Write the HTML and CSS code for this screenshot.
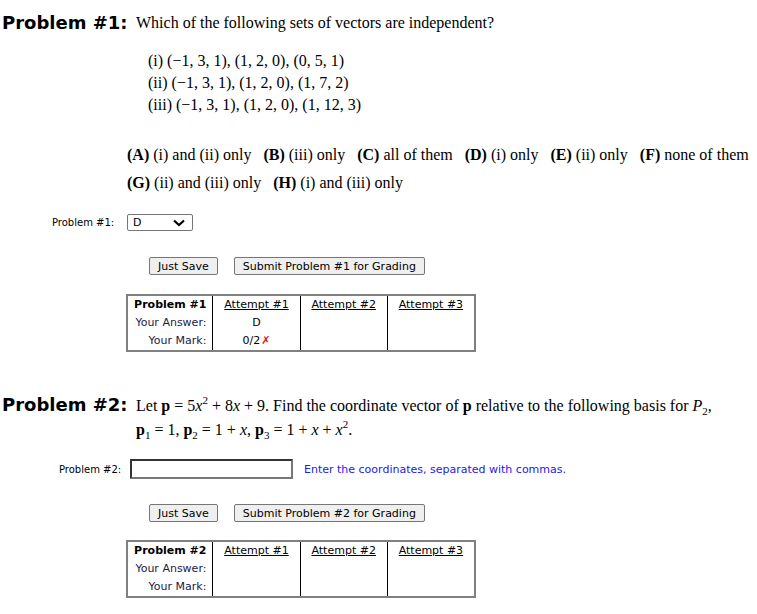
FILE: index.html
```html
<!DOCTYPE html>
<html lang="en">
<head>
  <meta charset="UTF-8" />
  <title>Problems</title>
  <link rel="stylesheet" href="styles.css">
</head>
<body>

  <div class="problem">
    <div class="problem-head">
      <span class="problem-title">Problem #1:</span>
      <div class="question">
        <p class="q-line">Which of the following sets of vectors are independent?</p>
        <div class="vectors">
          <div>(i) (&minus;1, 3, 1), (1, 2, 0), (0, 5, 1)</div>
          <div>(ii) (&minus;1, 3, 1), (1, 2, 0), (1, 7, 2)</div>
          <div>(iii) (&minus;1, 3, 1), (1, 2, 0), (1, 12, 3)</div>
        </div>
      </div>
    </div>

    <div class="choices">
      <div><b>(A)</b> (i) and (ii) only &nbsp; <b>(B)</b> (iii) only &nbsp; <b>(C)</b> all of them &nbsp; <b>(D)</b> (i) only &nbsp; <b>(E)</b> (ii) only &nbsp; <b>(F)</b> none of them</div>
      <div><b>(G)</b> (ii) and (iii) only &nbsp; <b>(H)</b> (i) and (iii) only</div>
    </div>

    <div class="answer-row">
      <label class="answer-label">Problem #1:</label>
      <div class="fake-select">
        <span>D</span>
        <svg width="14" height="10" viewBox="0 0 14 10"><path d="M2 2.5 L7 7 L12 2.5" fill="none" stroke="#000" stroke-width="2.2"/></svg>
      </div>
    </div>

    <div class="buttons">
      <button class="button">Just Save</button>
      <button class="button">Submit Problem #1 for Grading</button>
    </div>

    <table class="attempts">
      <tr>
        <th class="row-head">Problem #1</th>
        <td><a href="#">Attempt #1</a></td>
        <td><a href="#">Attempt #2</a></td>
        <td><a href="#">Attempt #3</a></td>
      </tr>
      <tr>
        <th class="row-label">Your Answer:</th>
        <td>D</td>
        <td></td>
        <td></td>
      </tr>
      <tr>
        <th class="row-label">Your Mark:</th>
        <td>0/2<span class="wrong">&#x2717;</span></td>
        <td></td>
        <td></td>
      </tr>
    </table>
  </div>

  <div class="problem problem-2">
    <div class="problem-head">
      <span class="problem-title">Problem #2:</span>
      <div class="question">
        <p class="q-line q2">Let <b>p</b> = 5<i>x</i><sup>2</sup> + 8<i>x</i> + 9. Find the coordinate vector of <b>p</b> relative to the following basis for <i>P</i><sub>2</sub>,</p>
        <p class="q-line q2"><b>p</b><sub>1</sub> = 1, <b>p</b><sub>2</sub> = 1 + <i>x</i>, <b>p</b><sub>3</sub> = 1 + <i>x</i> + <i>x</i><sup>2</sup>.</p>
      </div>
    </div>

    <div class="answer-row answer-row-2">
      <label class="answer-label">Problem #2:</label>
      <input class="text-input" type="text">
      <span class="hint">Enter the coordinates, separated with commas.</span>
    </div>

    <div class="buttons buttons-2">
      <button class="button">Just Save</button>
      <button class="button">Submit Problem #2 for Grading</button>
    </div>

    <table class="attempts attempts-2">
      <tr>
        <th class="row-head">Problem #2</th>
        <td><a href="#">Attempt #1</a></td>
        <td><a href="#">Attempt #2</a></td>
        <td><a href="#">Attempt #3</a></td>
      </tr>
      <tr>
        <th class="row-label">Your Answer:</th>
        <td></td>
        <td></td>
        <td></td>
      </tr>
      <tr>
        <th class="row-label">Your Mark:</th>
        <td></td>
        <td></td>
        <td></td>
      </tr>
    </table>
  </div>

</body>
</html>
```

FILE: styles.css
```css
body {
    margin: 0;
    padding: 12px 0 0 2px;
    background-color: #ffffff;
    color: #000;
    font-family: 'DejaVu Sans', Verdana, sans-serif;
}

.problem-head {
    display: flex;
    align-items: flex-start;
}

.problem-title {
    font-size: 18px;
    font-weight: bold;
    line-height: 22px;
    width: 134px;
    flex-shrink: 0;
    white-space: nowrap;
}

.question {
    font-family: 'Liberation Serif', 'Times New Roman', serif;
    font-size: 16px;
}

.q-line {
    margin: 0;
    line-height: 22px;
}

.vectors {
    margin: 16px 0 0 12px;
    line-height: 22px;
}

.choices {
    font-family: 'Liberation Serif', 'Times New Roman', serif;
    font-size: 16px;
    margin: 25px 0 0 125px;
    line-height: 28px;
    white-space: nowrap;
}

.answer-row {
    display: flex;
    align-items: center;
    margin-top: 17px;
}

.answer-label {
    font-size: 10px;
    width: 125px;
    padding-left: 50px;
    box-sizing: border-box;
}

.fake-select {
    width: 66px;
    height: 17px;
    border: 1px solid #767676;
    border-radius: 2px;
    box-sizing: border-box;
    display: flex;
    align-items: center;
    justify-content: space-between;
    padding: 0 6px 0 5px;
    font-size: 11px;
}

.buttons {
    display: flex;
    gap: 16px;
    margin: 26px 0 0 147px;
}

.buttons-2 {
    margin-top: 25px;
}

.button {
    font-family: 'DejaVu Sans', Verdana, sans-serif;
    font-size: 11px;
    color: #000;
    background-color: #efefef;
    border: 1px solid #767676;
    border-radius: 2px;
    padding: 0 8px;
    height: 18px;
}

.attempts {
    margin: 19px 0 0 124px;
    border: 2px solid #808080;
    border-collapse: collapse;
    font-size: 11px;
    width: 350px;
}

.attempts-2 {
    margin-top: 18px;
}

.attempts th,
.attempts td {
    padding: 0 6px;
    height: 18px;
    line-height: 18px;
    text-align: center;
    border-left: 1px solid #000;
    width: 75px;
}

.attempts th {
    text-align: right;
    border-left: none;
    width: 73px;
}

.attempts .row-head {
    font-weight: bold;
    color: #000;
}

.attempts .row-label {
    font-weight: normal;
    color: #1a1a4a;
}

.attempts a {
    color: #000;
}

.wrong {
    color: #e01010;
    margin-left: 1px;
}

.problem-2 {
    margin-top: 42px;
}

.q2 {
    line-height: 24px;
}

.q2 sup,
.q2 sub {
    font-size: 11px;
    line-height: 0;
    vertical-align: baseline;
    position: relative;
}

.q2 sup {
    top: -7px;
}

.q2 sub {
    top: 4px;
}

.answer-row-2 {
    margin-top: 17px;
}

.answer-row-2 .answer-label {
    padding-left: 57px;
    width: 128px;
}

.text-input {
    width: 163px;
    height: 20px;
    box-sizing: border-box;
    border: 2px solid #333;
    border-right-color: #777;
    border-bottom-color: #777;
    border-radius: 1px;
    margin: 0;
}

.hint {
    font-size: 11px;
    color: #2020ee;
    margin-left: 11px;
}
```
